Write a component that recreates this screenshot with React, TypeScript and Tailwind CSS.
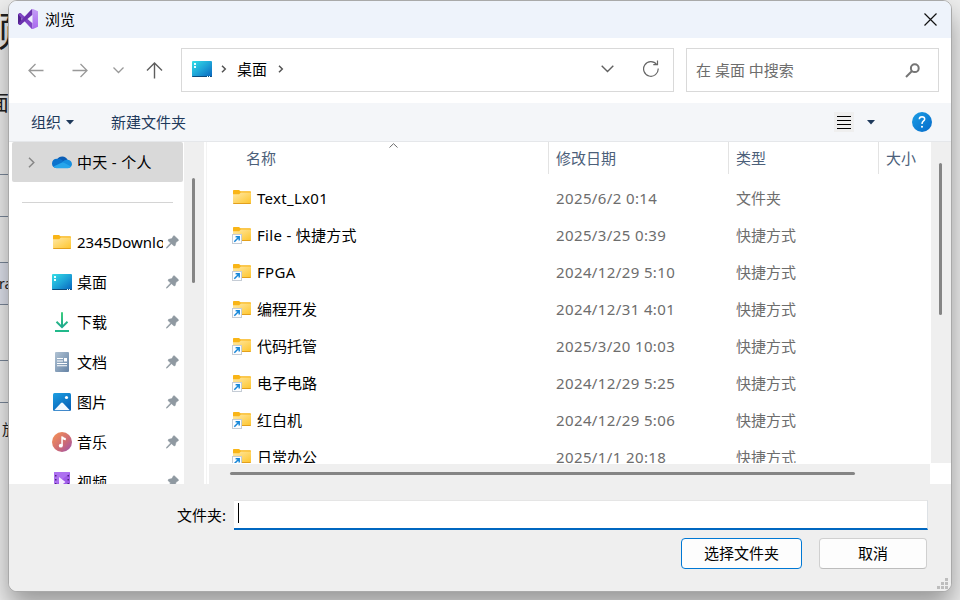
import type { ReactNode } from "react";
import clsx from "clsx";

type Entry = { name: string; date: string; type: string; shortcut?: boolean };

const entries: Entry[] = [
  { name: "Text_Lx01", date: "2025/6/2 0:14", type: "文件夹" },
  { name: "File - 快捷方式", date: "2025/3/25 0:39", type: "快捷方式", shortcut: true },
  { name: "FPGA", date: "2024/12/29 5:10", type: "快捷方式", shortcut: true },
  { name: "编程开发", date: "2024/12/31 4:01", type: "快捷方式", shortcut: true },
  { name: "代码托管", date: "2025/3/20 10:03", type: "快捷方式", shortcut: true },
  { name: "电子电路", date: "2024/12/29 5:25", type: "快捷方式", shortcut: true },
  { name: "红白机", date: "2024/12/29 5:06", type: "快捷方式", shortcut: true },
  { name: "日常办公", date: "2025/1/1 20:18", type: "快捷方式", shortcut: true },
];

const quickAccess: { name: string; icon: ReactNode }[] = [
  { name: "2345Downloads", icon: <FolderIcon /> },
  { name: "桌面", icon: <DesktopIcon /> },
  { name: "下载", icon: <DownloadIcon /> },
  { name: "文档", icon: <DocumentIcon /> },
  { name: "图片", icon: <PictureIcon /> },
  { name: "音乐", icon: <MusicIcon /> },
  { name: "视频", icon: <VideoIcon /> },
];

function VisualStudioLogo() {
  return (
    <svg width="20" height="20" viewBox="0 0 20 20">
      <defs>
        <linearGradient id="vs" x1="0" y1="0" x2="0" y2="1">
          <stop offset="0" stopColor="#c49df6" />
          <stop offset="1" stopColor="#a969ee" />
        </linearGradient>
      </defs>
      <path d="M0 5.2 2 4.1 3.6 5v10L2 15.9 0 14.8Z" fill="#52218f" />
      <path d="M2 4.1 3.6 5 14.5 14.3V20L13.5 19.7 0 5.2Z" fill="#8045c4" />
      <path d="M2 15.9 0 14.8 13.5.3 14.5 0V5.7L3.6 15Z" fill="#6a30ae" />
      <path d="M13.3.4 15 0 20 2.2V17.8L15 20 13.3 19.6 14.5 18.5V1.5Z" fill="url(#vs)" />
    </svg>
  );
}

function DesktopIcon() {
  return (
    <svg width="20" height="16" viewBox="0 0 20 16">
      <defs>
        <linearGradient id="desk" x1="0" y1="0" x2="1" y2="1">
          <stop offset="0" stopColor="#35dfe6" />
          <stop offset="0.5" stopColor="#1ea5d8" />
          <stop offset="1" stopColor="#0863bd" />
        </linearGradient>
      </defs>
      <rect width="20" height="16" rx="1" fill="url(#desk)" />
      <path d="M0 15H20Q20 16 19 16H1Q0 16 0 15Z" fill="#0b4a7c" />
      <path d="M2 2h2v2H2zM2 5h2v2H2zM15 15h1v1h-1zM17 15h1v1h-1z" fill="#e9ffff" />
    </svg>
  );
}

function FolderIcon({ shortcut }: { shortcut?: boolean }) {
  return (
    <svg width="20" height="20" viewBox="0 0 20 20">
      <defs>
        <linearGradient id="folder" x1="0" y1="0" x2="1" y2="1">
          <stop offset="0" stopColor="#ffe9a8" />
          <stop offset="1" stopColor="#fec62f" />
        </linearGradient>
      </defs>
      <path d="M1 3.8Q1 3 1.8 3H7L8.5 4.3H18.2Q19 4.3 19 5V8H1Z" fill="#f9b517" />
      <path d="M1 7.2H7.2L8.8 5.5H19V16H1.6Q1 16 1 15.4Z" fill="url(#folder)" />
      <path d="M1 16H19V16.2Q19 17 18.2 17H1.8Q1 17 1 16.2Z" fill="#e3a01c" />
      {shortcut && (
        <>
          <rect x="0.5" y="10.5" width="9" height="9" fill="#fdfdfe" stroke="#c5ccd5" />
          <path d="M2.3 17.7 7 13M3.6 12.8H7.2V16.4" fill="none" stroke="#1787d8" strokeWidth="1.5" />
        </>
      )}
    </svg>
  );
}

function CloudIcon() {
  return (
    <svg width="20" height="14" viewBox="0 0 20 14">
      <path d="M5 4.5A6 6 0 0 1 15.6 4.8L11 9 4 7Z" fill="#0b5db5" />
      <path d="M5 3.8Q7.5 3.2 9.8 5L14 8 4 13H3.8A4.6 4.6 0 0 1 0 8.5Q.2 4 5 3.8Z" fill="#0c73cd" />
      <path d="M10 7.5Q12 4.2 15.6 4.7 20 5.5 20 9.3 19.5 12.5 16.5 13L9 10Z" fill="#168fe0" />
      <path d="M1.5 11.5 9.5 7.7Q11.2 7 13 8.2L19 11.5Q18 13.2 16 13.2H4.5Q2.5 13.2 1.5 11.5Z" fill="#27a6ec" />
    </svg>
  );
}

function DownloadIcon() {
  return (
    <svg width="20" height="20" viewBox="0 0 20 20" fill="none">
      <defs>
        <linearGradient id="down" x1="0" y1="0" x2="0" y2="20" gradientUnits="userSpaceOnUse">
          <stop offset="0" stopColor="#3ccf7e" />
          <stop offset="1" stopColor="#149c92" />
        </linearGradient>
      </defs>
      <path d="M10 .2V15M4.5 9.8 10 15.2 15.5 9.8" stroke="url(#down)" strokeWidth="2" />
      <path d="M3 19H17" stroke="#22b98b" strokeWidth="2" />
    </svg>
  );
}

function DocumentIcon() {
  return (
    <svg width="20" height="20" viewBox="0 0 20 20">
      <defs>
        <linearGradient id="doc" x1="0" y1="0" x2="1" y2="1">
          <stop offset="0" stopColor="#b0c2d3" />
          <stop offset="1" stopColor="#6583a5" />
        </linearGradient>
      </defs>
      <rect x="3" width="14" height="20" rx="1" fill="url(#doc)" />
      <path d="M5 6h6v1H5zM5 8.5h6v1H5zM12 6h3v3.5h-3zM5 11h10v1H5zM5 13.3h10v1H5z" fill="#fff" />
    </svg>
  );
}

function PictureIcon() {
  return (
    <svg width="20" height="20" viewBox="0 0 20 20">
      <defs>
        <linearGradient id="pic" x1="0" y1="0" x2="0.6" y2="1">
          <stop offset="0" stopColor="#1e9fe2" />
          <stop offset="1" stopColor="#0662b8" />
        </linearGradient>
      </defs>
      <rect x="1" y="1" width="18" height="18" rx="1.5" fill="url(#pic)" />
      <path d="M2.2 18.2 9 11Q10 10 11 11L17.8 18.2Z" fill="#f1f8ff" />
      <circle cx="14.5" cy="5.5" r="1.6" fill="#fff" />
    </svg>
  );
}

function MusicIcon() {
  return (
    <svg width="20" height="20" viewBox="0 0 20 20">
      <defs>
        <linearGradient id="music" x1="0" y1="0" x2="1" y2="1">
          <stop offset="0.15" stopColor="#ee8a5c" />
          <stop offset="0.6" stopColor="#cb6a76" />
          <stop offset="1" stopColor="#9b52b4" />
        </linearGradient>
      </defs>
      <circle cx="10" cy="10" r="10" fill="url(#music)" />
      <ellipse cx="8.8" cy="13.7" rx="2" ry="1.9" fill="#fff" />
      <path d="M9.3 4.2 11 4.5Q11.5 5.8 13.8 6V8.2Q12 8.2 10.8 7.3V13.7H9.3Z" fill="#fff" />
    </svg>
  );
}

function VideoIcon() {
  return (
    <svg width="20" height="20" viewBox="0 0 20 20">
      <rect x="2" width="16" height="19" rx="1" fill="#9f5be8" />
      <path d="M2 1Q2 0 3 0H17Q18 0 18 1L2 14Z" fill="#ad70f0" />
      <path d="M3 3h1.5v1.5H3zM3 7h1.5v1.5H3zM3 11h1.5v1.5H3zM3 15h1.5v1.5H3zM15.5 3H17v1.5h-1.5zM15.5 7H17v1.5h-1.5zM15.5 11H17v1.5h-1.5zM15.5 15H17v1.5h-1.5z" fill="#4f2283" />
      <path d="M7 5 13.5 10 7 15Z" fill="#f5eaff" />
    </svg>
  );
}

function PinIcon() {
  return (
    <svg width="13" height="14" viewBox="0 0 13 14" fill="#8f99a1" stroke="#8f99a1" strokeWidth="0.5" strokeLinejoin="round">
      <path d="M7.4.9Q8 .5 8.6 1L12.3 4.6Q13 5.3 12.2 5.8L10 7.2 9.3 10.3Q8.7 11.5 7.8 10.8L5.5 8.7 1.3 12.9 .4 13.2.6 12.2 4.6 8 2.2 5.8Q1.7 4.8 2.7 4.3L5.9 3.6Z" />
    </svg>
  );
}

function HelpIcon() {
  return (
    <svg width="20" height="20" viewBox="0 0 20 20" fill="none">
      <defs>
        <linearGradient id="help" x1="0" y1="0" x2="1" y2="1">
          <stop offset="0" stopColor="#1c9fe6" />
          <stop offset="1" stopColor="#0569c9" />
        </linearGradient>
      </defs>
      <circle cx="10" cy="10" r="10" fill="url(#help)" />
      <path d="M7.3 7.2Q7.4 4.8 10 4.7 12.6 4.8 12.7 7 12.7 8.2 11.3 9.2 10 10.1 10 12" stroke="#fff" strokeWidth="1.5" />
      <circle cx="10" cy="14.8" r="1.05" fill="#fff" />
    </svg>
  );
}

function Stroke({ d, w, h, color, width = 1.3 }: { d: string; w: number; h: number; color: string; width?: number }) {
  return (
    <svg width={w} height={h} viewBox={`0 0 ${w} ${h}`} fill="none" stroke={color} strokeWidth={width} className="shrink-0">
      <path d={d} />
    </svg>
  );
}

// Page that shows at the left of the dialog
function Backdrop() {
  return (
    <div className="absolute inset-y-0 left-0 w-[10px] overflow-hidden text-[#202020]">
      <div className="absolute top-[174px] h-[43px] w-full border-y border-[#7a8799]" />
      <div className="absolute top-[262px] h-[43px] w-full border-y border-[#7a8799] bg-[#dfe2ec]" />
      <div className="absolute top-[360px] h-[43px] w-full border-y border-[#7a8799]" />
      <span className="absolute -left-[20px] top-[6px] text-[40px] leading-[50px]">顾</span>
      <span className="absolute -left-[12px] top-[88px] text-[21px] leading-[28px]">面</span>
      <span className="absolute -left-[1px] top-[274px] text-[14px] leading-5">ra</span>
      <span className="absolute left-[2px] top-[419px] text-[15px] leading-5">放</span>
    </div>
  );
}

function TitleBar() {
  return (
    <div className="flex h-[37px] shrink-0 items-center bg-[#eef3fb] pb-px pl-[9px] pr-[14px]">
      <VisualStudioLogo />
      <span className="ml-[7px] flex-1 pb-px">浏览</span>
      <Stroke d="M.5.5 12.5 12.5M12.5.5.5 12.5" w={13} h={13} color="#111" width={1.2} />
    </div>
  );
}

function AddressBar() {
  return (
    <div className="flex h-[65px] shrink-0 items-center pb-px pr-3">
      <div className="flex w-[172px] items-center pl-[19px]">
        <Stroke d="M7.5 1 1 7.5 7.5 14M1 7.5H15.5" w={16} h={15} color="#999" />
        <span className="w-[28px]" />
        <Stroke d="M8.5 1 15 7.5 8.5 14M15 7.5H.5" w={16} h={15} color="#999" />
        <span className="w-[25px]" />
        <Stroke d="M.5.5 5.5 5.5 10.5.5" w={12} h={7} color="#999" />
        <span className="w-[21px]" />
        <Stroke d="M1 8.5 8.5 1 16 8.5M8.5 1V16.5" w={17} h={17} color="#5e5e5e" width={1.4} />
      </div>
      <div className="flex h-[44px] w-[493px] items-center border border-[#d9d9d9] pl-[10px] pr-[14px]">
        <span className="-mt-[3px] leading-none"><DesktopIcon /></span>
        <span className="-mt-[2px] ml-[9px]"><Stroke d="M1 .7 4.3 4 1 7.3" w={6} h={8} color="#555" width={1.5} /></span>
        <span className="-mt-[2px] ml-[10px]">桌面</span>
        <span className="-mt-[2px] ml-[11px] flex-1"><Stroke d="M1 .7 4.3 4 1 7.3" w={6} h={8} color="#555" width={1.5} /></span>
        <span className="-mt-[2px]"><Stroke d="M.7.7 6.5 6.5 12.3.7" w={13} h={8} color="#606060" width={1.4} /></span>
        <span className="-mt-[3px] ml-[28px]">
          <Stroke d="M14.7 4.5A7.3 7.3 0 1 0 16.2 8.5M15.5.5V4.7H11.3" w={17} h={17} color="#666" width={1.2} />
        </span>
      </div>
      <div className="ml-3 flex h-[44px] flex-1 items-center border border-[#d9d9d9] pl-[9px] pr-[18px] text-[#6d6d6d]">
        <span className="flex-1">在 桌面 中搜索</span>
        <svg width="15" height="15" viewBox="0 0 15 15" fill="none" stroke="#757575" className="mt-px">
          <circle cx="9.8" cy="5.2" r="3.9" strokeWidth="2" />
          <path d="M7 8 1 14" strokeWidth="2" />
        </svg>
      </div>
    </div>
  );
}

function Toolbar() {
  return (
    <div className="flex h-[39px] shrink-0 items-center border-b border-[#e5e7ea] bg-[#f4f6f9] pl-[22px] pr-[19px] text-[#1e395b]">
      <span>组织</span>
      <svg width="8" height="5" viewBox="0 0 8 5" className="ml-[5px]"><path d="M0 0H8L4 4.5Z" fill="#1e395b" /></svg>
      <span className="ml-[37px] flex-1">新建文件夹</span>
      <div className="flex h-5 w-5 flex-col items-center justify-center gap-[3px] bg-[#efefef]">
        <i className="h-px w-[14px] bg-black" />
        <i className="h-px w-[14px] bg-black" />
        <i className="h-px w-[14px] bg-black" />
        <i className="h-px w-[14px] bg-black" />
      </div>
      <svg width="8" height="5" viewBox="0 0 8 5" className="ml-[13px] mr-[37px]"><path d="M0 0H8L4 4.5Z" fill="#1e395b" /></svg>
      <HelpIcon />
    </div>
  );
}

function Sidebar() {
  return (
    <div className="flex w-[195px] shrink-0 overflow-hidden">
      <div className="w-[175px] shrink-0 bg-white">
        <div className="ml-[3px] flex h-10 w-[171px] items-center rounded-[2px] bg-[#d9d9d9] pl-[16px]">
          <Stroke d="M1 .7 5.8 5.5 1 10.3" w={7} h={11} color="#888" width={1.5} />
          <span className="ml-[17px]"><CloudIcon /></span>
          <span className="ml-[5px] tracking-[0.3px]">中天 - 个人</span>
        </div>
        <div className="mx-[13px] flex h-10 w-[151px] items-center"><div className="h-px w-full bg-[#d4d4d4]" /></div>
        {quickAccess.map((item) => (
          <div key={item.name} className="flex h-10 items-center pl-[43px]">
            {item.icon}
            <span className="ml-[5px] w-[86px] shrink-0 overflow-hidden whitespace-nowrap">{item.name}</span>
            <span className="ml-[3px]"><PinIcon /></span>
          </div>
        ))}
      </div>
      <div className="w-5 bg-[#efefef] pl-2 pt-9">
        <div className="h-[105px] w-[3px] rounded-full bg-[#858585]" />
      </div>
    </div>
  );
}

function FileList() {
  return (
    <div className="flex min-w-0 flex-1 flex-col">
      <div className="flex h-[321px]">
        <div className="relative flex-1 overflow-hidden">
          {/* sort direction mark */}
          <span className="absolute left-[180px] top-px"><Stroke d="M.5 4.5 4.5.7 8.5 4.5" w={9} h={5} color="#6b6b6b" width={1} /></span>
          <div className="flex h-[32px] items-center text-[#4c607a]">
            <span className="flex h-full w-[340px] items-center border-r border-[#e3e3e3] pl-[37px]">名称</span>
            <span className="flex h-full w-[180px] items-center border-r border-[#e3e3e3] pl-[7px]">修改日期</span>
            <span className="flex h-full w-[150px] items-center border-r border-[#e3e3e3] pl-[7px]">类型</span>
            <span className="pl-[7px]">大小</span>
          </div>
          <div className="pt-[13px]">
            {entries.map((entry) => (
              <div key={entry.name} className="flex h-[37px] items-start text-[#6d6d6d]">
                <span className="pl-[23px]"><FolderIcon shortcut={entry.shortcut} /></span>
                <span className={clsx("w-[304px] pl-[5px] pt-px text-black", /^[A-Z]/.test(entry.name) && "tracking-[0.3px]")}>{entry.name}</span>
                <span className="w-[180px] pt-px tracking-[0.38px]">{entry.date}</span>
                <span className="pt-px">{entry.type}</span>
              </div>
            ))}
          </div>
        </div>
        <div className="w-5 bg-[#efefef] pl-2 pt-[21px]">
          <div className="h-[152px] w-[3px] rounded-full bg-[#858585]" />
        </div>
      </div>
      <div className="flex flex-1">
        <div className="mt-px flex-1 bg-[#efefef] pl-[21px] pt-2">
          <div className="h-[3px] w-[625px] rounded-full bg-[#858585]" />
        </div>
        <div className="w-[21px] bg-white" />
      </div>
    </div>
  );
}

function Footer() {
  return (
    <div className="relative flex-1 bg-[#efefef] pt-4">
      <div className="flex items-center pl-[168px]">
        <label className="w-[57px]">文件夹:</label>
        <div className="flex h-[30px] w-[694px] border-b-2 border-r border-t border-b-[#0067c0] border-r-[#dde1e5] border-t-[#e5e5e5] bg-white pl-[4px] pt-[2px]">
          <i className="h-5 w-px bg-black" />
        </div>
      </div>
      <div className="flex gap-[17px] pl-[672px] pt-2">
        <button className="h-[31px] w-[121px] rounded-[4px] border border-[#0078d4] bg-[#fdfdfd] pb-[2px]">选择文件夹</button>
        <button className="h-[31px] w-[108px] rounded-[4px] border border-[#d0d0d0] border-b-[#bdbdbd] bg-[#fdfdfd] pb-[2px]">取消</button>
      </div>
      <svg width="11" height="11" viewBox="0 0 11 11" fill="#bdbdbd" className="absolute bottom-[2px] right-[3px]">
        <path d="M8 0h3v3H8zM4 4h3v3H4zM8 4h3v3H8zM0 8h3v3H0zM4 8h3v3H4zM8 8h3v3H8z" />
      </svg>
    </div>
  );
}

export default function App() {
  return (
    <div className="relative h-[600px] w-[960px] overflow-hidden bg-[#ededed] pl-2 font-['Noto_Sans','Noto_Sans_CJK_SC',sans-serif] text-[15px] leading-5 text-black">
      <Backdrop />
      <div className="relative flex h-[592px] w-[944px] flex-col overflow-hidden rounded-[9px] border border-[#a9a9a9] bg-white shadow-[0_14px_26px_rgba(0,0,0,0.36)]">
        <TitleBar />
        <AddressBar />
        <Toolbar />
        <div className="flex h-[342px] shrink-0">
          <Sidebar />
          <div className="w-[5px] shrink-0 pl-[2px]"><div className="h-full w-px bg-[#f3f3f3]" /></div>
          <FileList />
        </div>
        <Footer />
      </div>
    </div>
  );
}
